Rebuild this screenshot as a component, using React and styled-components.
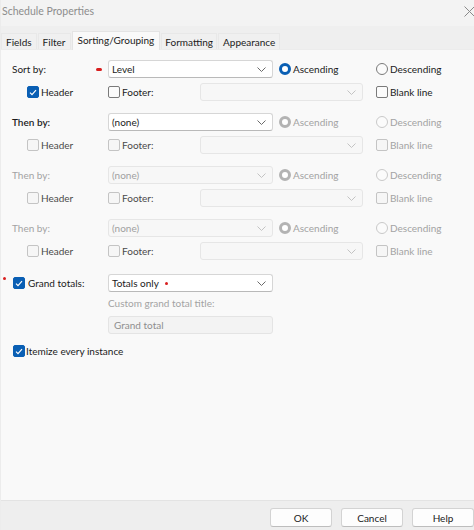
import React from "react";
import styled, { createGlobalStyle, css } from "styled-components";

const GlobalStyle = createGlobalStyle`
  html, body { margin: 0; padding: 0; background: #f9f9f9; }
  body { font-family: Lato, "Open Sans", "Liberation Sans", sans-serif; font-size: 10px; color: #1b1b1b; }
  * { box-sizing: border-box; }
`;

const Window = styled.div`
  width: 474px;
  height: 530px;
  display: flex;
  flex-direction: column;
  overflow: hidden;
  background: #f9f9f9;
  border-left: 1px solid #ececec;
`;

const TitleBar = styled.div`
  height: 26px;
  flex: none;
  display: flex;
  align-items: center;
  justify-content: space-between;
  background: #f3f3f3;
  padding-left: 1px;
  padding-bottom: 4px;
`;

const Title = styled.div`
  color: #8d8d8d;
  font-size: 10.5px;
`;

const Close = styled.svg`
  width: 11px;
  height: 11px;
  margin-right: -1px;
`;

const TabBar = styled.div`
  height: 24px;
  flex: none;
  display: flex;
  align-items: flex-end;
  background: #efefef;
  border-bottom: 1px solid #ececec;
`;

const Tab = styled.div`
  height: ${(p) => (p.$active ? 19 : 16)}px;
  padding: 0 ${(p) => p.$pad}px;
  display: flex;
  align-items: ${(p) => (p.$active ? "flex-start" : "center")};
  padding-top: ${(p) => (p.$active ? 2 : 0)}px;
  color: #1b1b1b;
  background: ${(p) => (p.$active ? "#f9f9f9" : "#f0f0f0")};
  border: 1px solid ${(p) => (p.$active ? "#e4e4e4" : "#e8e8e8")};
  border-bottom: none;
  margin-right: 1px;
  margin-bottom: ${(p) => (p.$active ? -1 : 0)}px;
  white-space: nowrap;
`;

const Content = styled.div`
  flex: 1;
  display: flex;
  flex-direction: column;
  padding-top: 10px;
`;

const Groups = styled.div`
  display: flex;
  flex-direction: column;
  gap: 12px;
`;

const Group = styled.div`
  display: flex;
  flex-direction: column;
  gap: 5px;
`;

const Row = styled.div`
  height: 18px;
  display: flex;
  align-items: center;
  padding-left: ${(p) => p.$pad || 0}px;
  margin-top: ${(p) => p.$mt || 0}px;
`;

const Label = styled.div`
  width: ${(p) => p.$w}px;
  flex: none;
  color: ${(p) => (p.$dim ? "#a3a3a3" : "#1b1b1b")};
  font-weight: ${(p) => (p.$strong ? 600 : 400)};
  white-space: nowrap;
`;

const MarkerCell = styled.div`
  width: 12px;
  flex: none;
  display: flex;
  align-items: center;
`;

const Dash = styled.span`
  display: block;
  width: 6px;
  height: 3px;
  border-radius: 2px;
  background: #d81e1e;
`;

const Dot = styled.span`
  display: inline-block;
  width: 3px;
  height: 3px;
  border-radius: 50%;
  background: #d81e1e;
  margin-left: ${(p) => p.$ml || 0}px;
  align-self: ${(p) => (p.$top ? "flex-start" : "center")};
  margin-top: ${(p) => p.$mt || 0}px;
`;

const SelectBox = styled.div`
  width: ${(p) => p.$w}px;
  height: 18px;
  flex: none;
  display: flex;
  align-items: center;
  justify-content: space-between;
  padding: 0 6px 0 3px;
  border-radius: 3px;
  ${(p) =>
    p.$disabled
      ? css`
          background: #f7f7f7;
          border: 1px solid #e6e6e6;
          color: #a0a0a0;
        `
      : css`
          background: #ffffff;
          border: 1px solid #d6d6d6;
          border-bottom-color: #b9b9b9;
          color: #1b1b1b;
        `}
`;

const SelectText = styled.span`
  display: flex;
  align-items: center;
`;

const Chevron = ({ disabled }) => (
  <svg width="9" height="5" viewBox="0 0 9 5">
    <path d="M0.5 0.5 L4.5 4.5 L8.5 0.5" fill="none" stroke={disabled ? "#c3c3c3" : "#6a6a6a"} strokeWidth="1" />
  </svg>
);

const Select = ({ w, value, disabled, children }) => (
  <SelectBox $w={w} $disabled={disabled}>
    <SelectText>
      {value}
      {children}
    </SelectText>
    <Chevron disabled={disabled} />
  </SelectBox>
);

const Option = styled.div`
  width: ${(p) => p.$w || "auto"}px;
  flex: none;
  display: flex;
  align-items: center;
  gap: ${(p) => p.$gap ?? 2}px;
  color: ${(p) => (p.$dim ? "#a3a3a3" : p.$soft ? "#4a4a4a" : "#1b1b1b")};
  white-space: nowrap;
  margin-left: ${(p) => p.$ml || 0}px;
`;

const Box = styled.span`
  width: 12px;
  height: 12px;
  flex: none;
  border-radius: 2px;
  display: flex;
  align-items: center;
  justify-content: center;
  ${(p) =>
    p.$checked
      ? css`
          background: #0a5fb4;
          border: 1px solid #0a5fb4;
        `
      : p.$disabled
      ? css`
          background: #f6f6f6;
          border: 1px solid #c4c4c4;
        `
      : css`
          background: #fbfbfb;
          border: 1px solid #7a7a7a;
        `}
`;

const Check = ({ checked, disabled }) => (
  <Box $checked={checked} $disabled={disabled}>
    {checked && (
      <svg width="8" height="7" viewBox="0 0 8 7">
        <path d="M1 3.6 L3 5.6 L7 1.2" fill="none" stroke="#ffffff" strokeWidth="1.2" />
      </svg>
    )}
  </Box>
);

const Circle = styled.span`
  width: 12px;
  height: 12px;
  flex: none;
  border-radius: 50%;
  ${(p) =>
    p.$checked
      ? css`
          background: #ffffff;
          border: 3.5px solid ${p.$disabled ? "#b3b3b3" : "#0a5fb4"};
        `
      : css`
          background: #fbfbfb;
          border: 1px solid ${p.$disabled ? "#c9c9c9" : "#7a7a7a"};
        `}
`;

const Hint = styled.div`
  margin: 4px 0 0 107px;
  height: 14px;
  line-height: 14px;
  color: #a3a3a3;
`;

const TextInput = styled.div`
  margin: 6px 0 0 107px;
  width: 165px;
  height: 18px;
  display: flex;
  align-items: center;
  padding-left: 5px;
  background: #f3f3f3;
  border: 1px solid #e4e4e4;
  border-radius: 3px;
  color: #8e8e8e;
`;

const Footer = styled.div`
  height: 30px;
  flex: none;
  display: flex;
  justify-content: flex-end;
  align-items: flex-start;
  gap: 9px;
  padding-top: 7px;
  background: #eeeeee;
  border-top: 1px solid #e3e3e3;
`;

const Button = styled.button`
  width: 62px;
  height: 19px;
  padding: 0;
  font: inherit;
  color: #1b1b1b;
  background: #fdfdfd;
  border: 1px solid #d3d3d3;
  border-bottom-color: #bdbdbd;
  border-radius: 3px;
`;

const groups = [
  { label: "Sort by:", value: "Level", first: true },
  { label: "Then by:", value: "(none)", strong: true },
  { label: "Then by:", value: "(none)", dim: true },
  { label: "Then by:", value: "(none)", dim: true },
];

export default function App() {
  return (
    <>
      <GlobalStyle />
      <Window>
        <TitleBar>
          <Title>Schedule Properties</Title>
          <Close viewBox="0 0 11 11">
            <path d="M0.5 0.5 L10.5 10.5 M10.5 0.5 L0.5 10.5" stroke="#8a8a8a" strokeWidth="1" />
          </Close>
        </TitleBar>
        <TabBar>
          <Tab $pad={4}>Fields</Tab>
          <Tab $pad={4}>Filter</Tab>
          <Tab $pad={5} $active>Sorting/Grouping</Tab>
          <Tab $pad={3}>Formatting</Tab>
          <Tab $pad={4}>Appearance</Tab>
        </TabBar>
        <Content>
          <Groups>
            {groups.map((g, i) => (
              <Group key={i}>
                <Row $pad={11}>
                  <Label $w={84} $dim={g.dim} $strong={g.strong}>{g.label}</Label>
                  <MarkerCell>{g.first && <Dash />}</MarkerCell>
                  <Select w={165} value={g.value} disabled={g.dim} />
                  <Option $w={97} $ml={6} $dim={!g.first}>
                    <Circle $checked $disabled={!g.first} />
                    Ascending
                  </Option>
                  <Option $dim={!g.first}>
                    <Circle $disabled={!g.first} />
                    Descending
                  </Option>
                </Row>
                <Row $pad={26}>
                  <Option $w={81} $soft={!g.first}>
                    <Check checked={g.first} disabled={!g.first} />
                    Header
                  </Option>
                  <Option $w={92} $soft={!g.first}>
                    <Check disabled={!g.first} />
                    Footer:
                  </Option>
                  <Select w={163} disabled />
                  <Option $ml={13} $dim={!g.first}>
                    <Check disabled={!g.first} />
                    Blank line
                  </Option>
                </Row>
              </Group>
            ))}
          </Groups>
          <Row $pad={2} $mt={14}>
            <Dot $top $mt={3} />
            <Option $w={95} $ml={7} $gap={3}>
              <Check checked />
              Grand totals:
            </Option>
            <Select w={165} value="Totals only">
              <Dot $ml={6} />
            </Select>
          </Row>
          <Hint>Custom grand total title:</Hint>
          <TextInput>Grand total</TextInput>
          <Row $pad={12} $mt={8}>
            <Option $gap={1}>
              <Check checked />
              Itemize every instance
            </Option>
          </Row>
        </Content>
        <Footer>
          <Button>OK</Button>
          <Button>Cancel</Button>
          <Button>Help</Button>
        </Footer>
      </Window>
    </>
  );
}
